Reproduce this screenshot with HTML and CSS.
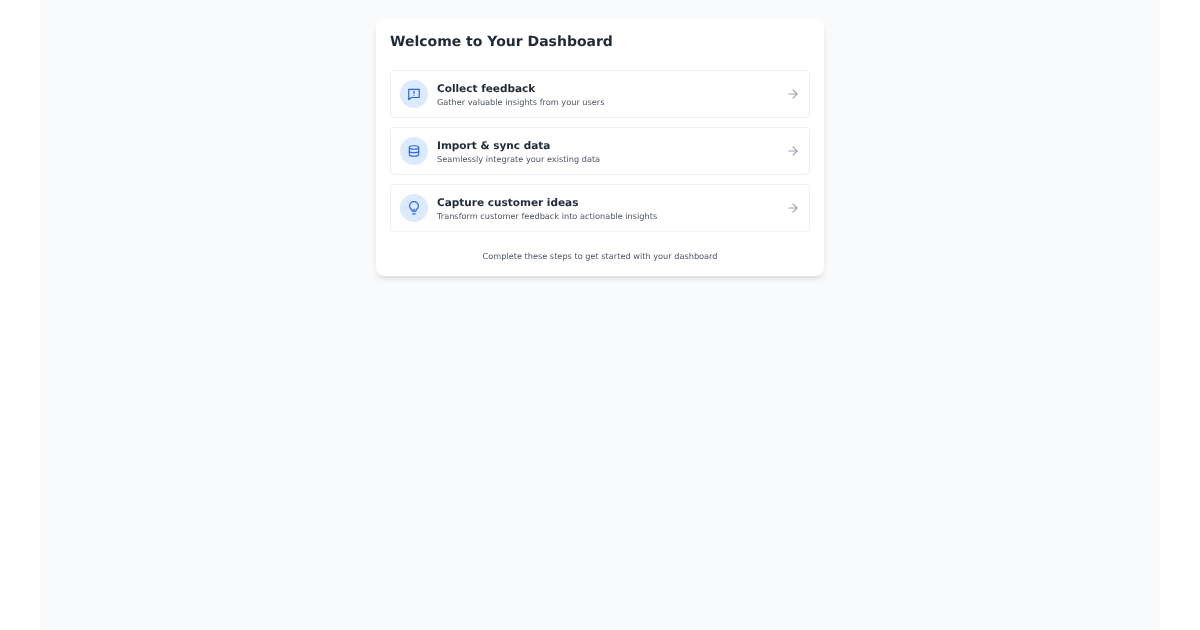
FILE: index.html
```html
<!DOCTYPE html>
<html lang="en">
<head>
    <meta charset="UTF-8">
    <meta name="viewport" content="width=device-width, initial-scale=1.0">
    <title>Dashboard</title>
    <link rel="stylesheet" href="styles.css">
</head>
<body>
    <div class="page">
        <div class="card">
            <h1 class="title">Welcome to Your Dashboard</h1>
            <div class="steps">
                <a class="step" href="#">
                    <span class="step-icon">
                        <svg viewBox="0 0 24 24" width="14" height="14" fill="none" stroke="currentColor" stroke-width="2" stroke-linecap="round" stroke-linejoin="round">
                            <path d="M3 4h18v14H7.5L3 21.5z"/>
                            <path d="M12 7.5v4"/>
                            <path d="M12 14.5h.01"/>
                        </svg>
                    </span>
                    <span class="step-text">
                        <span class="step-title">Collect feedback</span>
                        <span class="step-desc">Gather valuable insights from your users</span>
                    </span>
                    <svg class="arrow" viewBox="0 0 24 24" width="14" height="14" fill="none" stroke="currentColor" stroke-width="2" stroke-linecap="round" stroke-linejoin="round">
                        <path d="M5 12h14"/>
                        <path d="M12 5l7 7-7 7"/>
                    </svg>
                </a>
                <a class="step" href="#">
                    <span class="step-icon">
                        <svg viewBox="0 0 24 24" width="14" height="14" fill="none" stroke="currentColor" stroke-width="2" stroke-linecap="round" stroke-linejoin="round">
                            <ellipse cx="12" cy="6" rx="8" ry="3"/>
                            <path d="M4 6v12c0 1.66 3.6 3 8 3s8-1.34 8-3V6"/>
                            <path d="M4 12c0 1.66 3.6 3 8 3s8-1.34 8-3"/>
                        </svg>
                    </span>
                    <span class="step-text">
                        <span class="step-title">Import &amp; sync data</span>
                        <span class="step-desc">Seamlessly integrate your existing data</span>
                    </span>
                    <svg class="arrow" viewBox="0 0 24 24" width="14" height="14" fill="none" stroke="currentColor" stroke-width="2" stroke-linecap="round" stroke-linejoin="round">
                        <path d="M5 12h14"/>
                        <path d="M12 5l7 7-7 7"/>
                    </svg>
                </a>
                <a class="step" href="#">
                    <span class="step-icon">
                        <svg viewBox="0 0 24 24" width="14" height="14" fill="none" stroke="currentColor" stroke-width="2" stroke-linecap="round" stroke-linejoin="round">
                            <path d="M15 17.5c0-1.7.8-2.7 2-3.8 1.6-1.4 2.5-3.2 2.5-5.2a7.5 7.5 0 0 0-15 0c0 2 .9 3.8 2.5 5.2 1.2 1.1 2 2.1 2 3.8z"/>
                            <path d="M10 22h4"/>
                            <path d="M12 14v3"/>
                        </svg>
                    </span>
                    <span class="step-text">
                        <span class="step-title">Capture customer ideas</span>
                        <span class="step-desc">Transform customer feedback into actionable insights</span>
                    </span>
                    <svg class="arrow" viewBox="0 0 24 24" width="14" height="14" fill="none" stroke="currentColor" stroke-width="2" stroke-linecap="round" stroke-linejoin="round">
                        <path d="M5 12h14"/>
                        <path d="M12 5l7 7-7 7"/>
                    </svg>
                </a>
            </div>
            <p class="note">Complete these steps to get started with your dashboard</p>
        </div>
    </div>
</body>
</html>
```

FILE: styles.css
```css
* {
    box-sizing: border-box;
}
html, body {
    height: 100%;
}
body {
    margin: 0;
    background-color: white;
    font-family: "DejaVu Sans", sans-serif;
    text-rendering: geometricPrecision;
    overflow: hidden;
}
.page {
    width: 1120px;
    height: 100%;
    margin: 0 auto;
    padding-top: 19px;
    background-color: #f9fafb;
}
.card {
    width: 448px;
    height: 257px;
    margin: 0 auto;
    padding: 13px 14px;
    background-color: white;
    border-radius: 8px;
    box-shadow: 0 4px 6px -1px rgba(0, 0, 0, 0.1), 0 2px 4px -2px rgba(0, 0, 0, 0.1);
    will-change: transform;
}
.title {
    margin: 0 0 18px;
    font-size: 14px;
    line-height: 20px;
    font-weight: 700;
    color: #1f2937;
}
.steps {
    display: flex;
    flex-direction: column;
    gap: 9px;
}
.step {
    display: flex;
    align-items: center;
    height: 48px;
    padding: 0 9px;
    border: 1px solid #eceef1;
    border-radius: 4px;
    text-decoration: none;
}
.step:last-child {
    border-bottom-color: #f3f4f6;
}
.step-icon {
    display: flex;
    align-items: center;
    justify-content: center;
    width: 28px;
    height: 28px;
    margin-right: 9px;
    border-radius: 50%;
    background-color: #dbeafe;
    color: #2563eb;
}
.step-text {
    display: flex;
    flex-direction: column;
    flex: 1;
}
.step-title {
    padding-top: 1px;
    font-size: 10.5px;
    line-height: 16px;
    font-weight: 600;
    color: #1f2937;
}
.step-desc {
    margin-top: -1px;
    font-size: 8.2px;
    line-height: 12px;
    color: #4b5563;
}
.arrow {
    color: #9ca3af;
}
.note {
    margin: 18px 0 0;
    font-size: 8.2px;
    line-height: 12px;
    text-align: center;
    color: #4b5563;
}
```
